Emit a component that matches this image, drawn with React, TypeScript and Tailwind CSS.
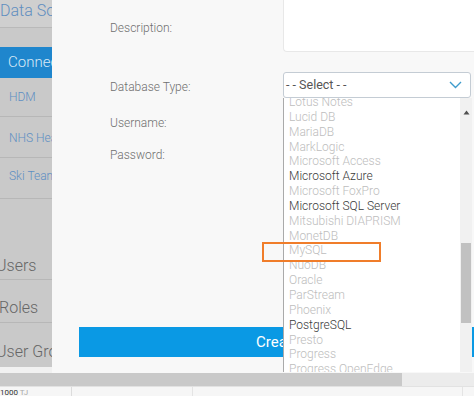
import React from "react";

const items: [string, boolean][] = [
  ["Lotus Notes", false],
  ["Lucid DB", false],
  ["MariaDB", false],
  ["MarkLogic", false],
  ["Microsoft Access", false],
  ["Microsoft Azure", true],
  ["Microsoft FoxPro", false],
  ["Microsoft SQL Server", true],
  ["Mitsubishi DIAPRISM", false],
  ["MonetDB", false],
  ["MySQL", false],
  ["NuoDB", false],
  ["Oracle", false],
  ["ParStream", false],
  ["Phoenix", false],
  ["PostgreSQL", true],
  ["Presto", false],
  ["Progress", false],
  ["Progress OpenEdge", false],
];

export default function App() {
  return (
    <div className="relative w-[474px] h-[396px] overflow-hidden bg-white font-['Roboto',sans-serif]">
      <div className="flex h-[373px]">
        {/* sidebar */}
        <div className="w-[52px] flex flex-col bg-[#f1f1f1]">
          <div className="h-[367px] bg-[#c9c9c9] overflow-hidden flex flex-col whitespace-nowrap font-light">
            <div className="h-[28px] bg-[#cfcfcf] border-b border-[#b9b9b9] text-[16px] leading-[20px] pt-[1px] text-[#5f8ec0]">
              Data Sources
            </div>
            <div className="h-[19px]" />
            <div className="h-[31px] bg-[#1f86cd] text-[#d8e9f6] text-[15px] pl-[8px] leading-[31px]">
              Connections
            </div>
            <div className="h-[39px] border-b border-[#b7b7b7] text-[12px] pl-[9px] pt-[10px] text-[#5e8fc3]">
              HDM
            </div>
            <div className="h-[41px] border-b border-[#b7b7b7] text-[12px] pl-[9px] pt-[12px] text-[#5e8fc3]">
              NHS Health
            </div>
            <div className="h-[41px] border-b border-[#b7b7b7] text-[12px] pl-[9px] pt-[9px] text-[#5e8fc3]">
              Ski Team
            </div>
            <div className="h-[46px]" />
            <div className="h-[35px] border-b border-[#b7b7b7] text-[16px] ml-[-4px] pt-[9px] text-[#666]">
              Users
            </div>
            <div className="h-[43px] border-b border-[#b7b7b7] text-[16px] ml-[-1px] pt-[16px] text-[#666]">
              Roles
            </div>
            <div className="flex-1 text-[16px] ml-[-4px] pt-[17px] text-[#666]">
              User Groups
            </div>
          </div>
        </div>
        {/* modal */}
        <div className="flex-1 bg-[#f8f8f8] flex flex-col pl-[27px] text-[12px] font-light text-[#6f6f6f]">
          <div className="flex h-[52px]">
            <div className="w-[204px] pl-[31px] pt-[20px] leading-[16px]">Description:</div>
            <div className="flex-1 bg-white border-l border-b border-[#e8e8e8] rounded-bl-[4px]" />
          </div>
          <div className="flex mt-[20px] h-[26px]">
            <div className="w-[204px] pl-[31px] pt-[7px] leading-[16px]">Database Type:</div>
            <div className="w-[188px] bg-white border border-[#c4ccd4] rounded-[3px] flex items-center justify-between pl-[2px] pr-[8px]">
              <span className="text-[#555] text-[12.5px] font-normal">- - Select - -</span>
              <svg width="13" height="8" viewBox="0 0 13 8" fill="none">
                <path d="M1 1l5.5 5.5L12 1" stroke="#3f9ccc" strokeWidth="1.4" />
              </svg>
            </div>
          </div>
          <div className="pl-[31px] mt-[17px] leading-[16px]">Username:</div>
          <div className="pl-[31px] mt-[16px] leading-[16px]">Password:</div>
          <div className="mt-[164px] h-[30px] bg-[#0a99e4] text-white text-[15px] font-normal leading-[30px] pl-[177px] whitespace-nowrap">
            Create Connection
          </div>
        </div>
      </div>
      {/* horizontal scrollbar */}
      <div className="flex h-[13px]">
        <div className="w-[402px] bg-[#c9c9c9]" />
        <div className="flex-1 bg-[#ececec]" />
      </div>
      {/* bottom strip */}
      <div className="flex h-[10px] bg-[#f6f6f6] border-t border-[#e2e2e2] text-[8px] leading-[12px] text-[#333]">
        <div className="w-[72px] border-r border-[#dcdcdc]">1000 <span className="text-[#aaa]">TJ</span></div>
        <div className="w-[121px] border-r border-[#e4e4e4]" />
        <div className="w-[270px] border-r border-[#e4e4e4]" />
      </div>

      {/* dropdown list overlay */}
      <div className="absolute left-[283px] top-[98px] w-[189px] h-[274px] bg-white border-l border-[#aaaaaa] flex overflow-hidden">
        <div className="flex-1 pl-[5px] overflow-hidden">
          <div className="-mt-[3px] text-[12px] font-light leading-[14.85px] whitespace-nowrap">
            {items.map(([t, en]) => (
              <div key={t} className={en ? "text-[#3a3a3a]" : "text-[#bdbdbd]"}>
                {t}
              </div>
            ))}
          </div>
        </div>
        <div className="w-[12px] bg-[#f1f1f1] flex flex-col items-center">
          <svg className="mt-[12px]" width="7" height="5" viewBox="0 0 7 5">
            <path d="M0.5 4.5L3.5 0.5L6.5 4.5Z" fill="#505050" />
          </svg>
          <div className="mt-[128px] w-[10px] h-[80px] bg-[#c1c1c1]" />
        </div>
      </div>

      {/* annotation */}
      <div className="absolute left-[262px] top-[242px] w-[119px] h-[20px] border-2 border-[#f07d2a]" />
    </div>
  );
}
